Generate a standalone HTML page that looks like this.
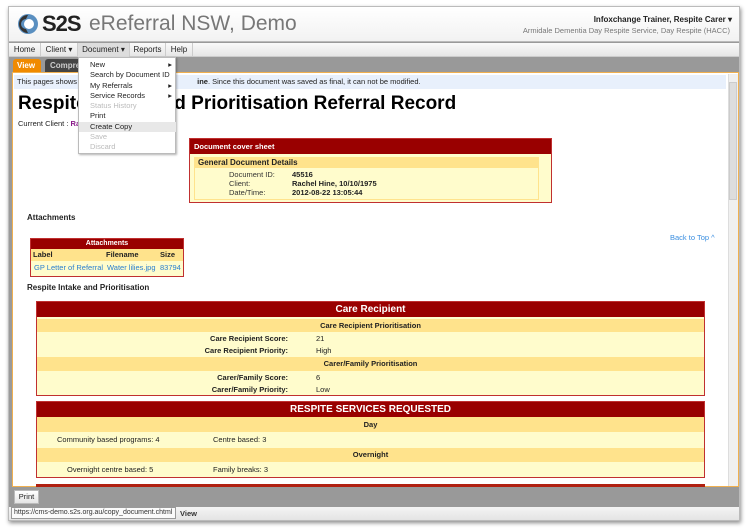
<!DOCTYPE html>
<html><head><meta charset="utf-8"><style>
*{margin:0;padding:0;box-sizing:border-box}
body{width:750px;height:532px;background:#fff;font-family:"Liberation Sans",Arial,sans-serif;font-size:8px;color:#222;position:relative;overflow:hidden}
.a{position:absolute}
.win{left:8px;top:6px;width:732px;height:515px;background:#9a9a9a;box-shadow:1px 2px 4px rgba(0,0,0,.45);border:1px solid #bbb}
.hdr{left:9px;top:7px;width:730px;height:35px;background:linear-gradient(#fff,#f2f2f2);border-bottom:1px solid #bbb}
.nav{left:9px;top:43px;width:730px;height:14px;background:linear-gradient(#fafafa,#e6e6e6);border-bottom:1px solid #ccc}
.nav span{position:absolute;top:0;height:14px;line-height:14px;font-size:8px;color:#222;border-right:1px solid #ccc;text-align:center}
.panel{left:12px;top:72px;width:727px;height:415px;background:#fff;border:1px solid #f0b050}
.red{background:#990000;color:#fff;font-weight:bold}
.dy{background:#ffe38c}
</style></head><body>
<div class="a win"></div>
<div class="a hdr"></div>
<svg class="a" style="left:16px;top:12px" width="24" height="24" viewBox="0 0 24 24"><circle cx="12" cy="12" r="10" fill="#5a8fc0"/><path d="M12 3a9 9 0 0 0 0 18l-2-4a5 5 0 0 1 0-10z" fill="#333"/><circle cx="13" cy="12" r="5" fill="#fff"/></svg>
<div class="a" style="left:42px;top:11px;font-size:22px;font-weight:bold;letter-spacing:-1px;color:#222">S2S</div>
<div class="a" style="left:89px;top:12px;font-size:21px;color:#777">eReferral NSW, Demo</div>
<div class="a" style="right:18px;top:15px;font-size:8px;font-weight:bold;color:#222">Infoxchange Trainer, Respite Carer ▾</div>
<div class="a" style="right:20px;top:26px;font-size:7.5px;color:#777">Armidale Dementia Day Respite Service, Day Respite (HACC)</div>
<div class="a nav"><span style="left:0;width:32px">Home</span><span style="left:32px;width:37px">Client ▾</span><span style="left:69px;width:52px;background:#ddd">Document ▾</span><span style="left:121px;width:36px">Reports</span><span style="left:157px;width:27px">Help</span></div>
<div class="a" style="left:9px;top:57px;width:730px;height:15px;background:#999"></div>
<div class="a" style="left:13px;top:59px;width:28px;height:13px;background:#f08a00;color:#fff;font-weight:bold;font-size:8px;line-height:13px;padding-left:4px;border-radius:3px 3px 0 0">View</div>
<div class="a" style="left:45px;top:59px;width:40px;height:13px;background:#444;color:#ccc;font-weight:bold;font-size:8px;line-height:13px;padding-left:5px;border-radius:3px 3px 0 0">Compre</div>
<div class="a panel"></div>
<div class="a" style="left:14px;top:75px;width:712px;height:14px;background:#e8f0fc;font-size:7.5px;line-height:14px;padding-left:3px">This pages shows <span style="margin-left:118px"><b>ine</b>. Since this document was saved as final, it can not be modified.</span></div>
<div class="a" style="left:728px;top:74px;width:10px;height:412px;background:#f0f0f0;border-left:1px solid #ddd"></div>
<div class="a" style="left:729px;top:82px;width:8px;height:118px;background:#ddd;border:1px solid #ccc"></div>
<div class="a" style="left:18px;top:93px;font-size:19px;font-weight:bold;color:#000">Respite Intake and Prioritisation Referral Record</div>
<div class="a" style="left:18px;top:119px;font-size:7.5px">Current Client : <span style="color:#8a1a8a;font-weight:bold">Rachel Hine</span></div>
<div class="a" style="left:78px;top:57px;width:98px;height:97px;background:#fff;border:1px solid #bbb;box-shadow:1px 1px 2px rgba(0,0,0,.3);font-size:7.5px;color:#222">
<div style="position:absolute;left:11px;top:2px;line-height:10.3px;width:86px">New<span style="float:right;margin-right:4px">▸</span><br>Search by Document ID<br>My Referrals<span style="float:right;margin-right:4px">▸</span><br>Service Records<span style="float:right;margin-right:4px">▸</span><br><span style="color:#bbb">Status History</span><br>Print<br><span style="display:block;background:#e8e8e8;margin-left:-11px;padding-left:11px">Create Copy</span><span style="color:#bbb">Save</span><br><span style="color:#bbb">Discard</span></div></div>
<div class="a" style="left:189px;top:138px;width:363px;height:65px;background:#fffccc;border:1px solid #c03030">
<div class="red" style="height:15px;line-height:15px;padding-left:4px;font-size:7.5px">Document cover sheet</div>
<div style="position:absolute;left:4px;top:18px;width:345px;height:43px;border:1px solid #ffe38c">
<div class="dy" style="height:10px;line-height:10px;font-weight:bold;font-size:8px;padding-left:3px">General Document Details</div>
<div style="position:absolute;left:34px;top:12px;line-height:9px;font-size:7.5px;color:#333">Document ID:<br>Client:<br>Date/Time:</div>
<div style="position:absolute;left:97px;top:12px;line-height:9px;font-size:7.5px;font-weight:bold">45516<br>Rachel Hine, 10/10/1975<br>2012-08-22 13:05:44</div></div></div>
<div class="a" style="left:27px;top:213px;font-weight:bold;font-size:8px">Attachments</div>
<div class="a" style="left:670px;top:233px;color:#3a8ee0;font-size:7.5px">Back to Top ^</div>
<div class="a" style="left:30px;top:238px;width:154px;height:39px;background:#fffccc;border:1px solid #c03030;font-size:7.5px">
<div class="red" style="height:10px;line-height:10px;text-align:center;font-size:7px">Attachments</div>
<div class="dy" style="height:12px;line-height:12px;font-weight:bold;position:relative"><span style="position:absolute;left:2px">Label</span><span style="position:absolute;left:75px">Filename</span><span style="position:absolute;left:129px">Size</span></div>
<div style="height:14px;line-height:14px;color:#2a7fd0;position:relative"><span style="position:absolute;left:3px">GP Letter of Referral</span><span style="position:absolute;left:76px">Water lilies.jpg</span><span style="position:absolute;left:129px">83794</span></div></div>
<div class="a" style="left:27px;top:283px;font-weight:bold;font-size:8px">Respite Intake and Prioritisation</div>
<div class="a" style="left:36px;top:301px;width:669px;height:95px;background:#fffccc;border:1px solid #c03030;font-size:7.5px">
<div class="red" style="height:15px;line-height:15px;text-align:center;font-size:10px">Care Recipient</div>
<div class="dy" style="margin-top:2px;height:13px;line-height:13px;text-align:center;font-weight:bold">Care Recipient Prioritisation</div>
<div style="height:25px;position:relative;line-height:12px;padding-top:1px"><div style="position:absolute;right:416px;text-align:right;font-weight:bold">Care Recipient Score:<br>Care Recipient Priority:</div><div style="position:absolute;left:279px">21<br>High</div></div>
<div class="dy" style="height:14px;line-height:14px;text-align:center;font-weight:bold">Carer/Family Prioritisation</div>
<div style="height:25px;position:relative;line-height:12px;padding-top:1px"><div style="position:absolute;right:416px;text-align:right;font-weight:bold">Carer/Family Score:<br>Carer/Family Priority:</div><div style="position:absolute;left:279px">6<br>Low</div></div></div>
<div class="a" style="left:36px;top:401px;width:669px;height:77px;background:#fffccc;border:1px solid #c03030;font-size:7.5px">
<div class="red" style="height:15px;line-height:15px;text-align:center;font-size:10px">RESPITE SERVICES REQUESTED</div>
<div class="dy" style="height:15px;line-height:15px;text-align:center;font-weight:bold">Day</div>
<div style="height:16px;line-height:16px;position:relative"><span style="position:absolute;left:20px">Community based programs: 4</span><span style="position:absolute;left:176px">Centre based: 3</span></div>
<div class="dy" style="height:14px;line-height:14px;text-align:center;font-weight:bold">Overnight</div>
<div style="height:15px;line-height:15px;position:relative"><span style="position:absolute;left:30px">Overnight centre based: 5</span><span style="position:absolute;left:176px">Family breaks: 3</span></div></div>
<div class="a" style="left:36px;top:484px;width:669px;height:3px;background:#b02010"></div>
<div class="a" style="left:9px;top:487px;width:730px;height:20px;background:#999"></div>
<div class="a" style="left:14px;top:490px;width:25px;height:14px;background:linear-gradient(#fff,#e4e4e4);border:1px solid #bbb;font-size:7.5px;line-height:12px;text-align:center">Print</div>
<div class="a" style="left:9px;top:507px;width:730px;height:13px;background:linear-gradient(#f4f4f4,#e4e4e4)"></div>
<div class="a" style="left:11px;top:507px;width:165px;height:12px;background:#fafafa;border:1px solid #999;font-size:7px;line-height:10px;padding-left:2px;color:#333">https://cms-demo.s2s.org.au/copy_document.chtml</div>
<div class="a" style="left:180px;top:509px;font-size:7.5px;font-weight:bold;color:#333">View</div>
</body></html>
